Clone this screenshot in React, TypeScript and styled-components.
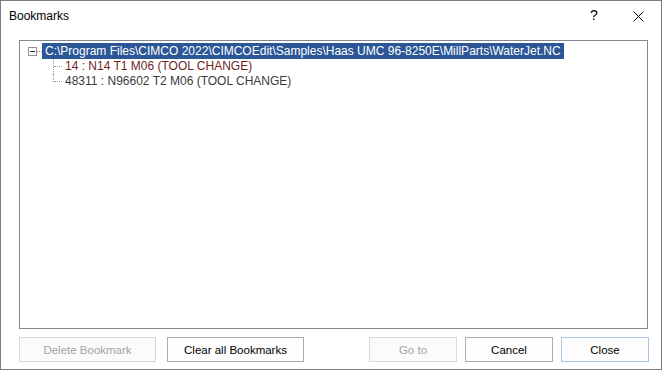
import React from "react";
import styled, { createGlobalStyle, css } from "styled-components";

const Global = createGlobalStyle`
  html, body { margin: 0; padding: 0; background: #ffffff; }
  * { box-sizing: border-box; }
  body { font-family: "Liberation Sans", Arial, sans-serif; font-size: 12px; color: #000; }
`;

const Window = styled.div`
  width: 662px;
  height: 370px;
  border: 1px solid #7b7b7b;
  background: #ffffff;
  display: flex;
  flex-direction: column;
`;

const TitleBar = styled.div`
  height: 30px;
  display: flex;
  align-items: center;
  padding-left: 8px;
`;

const Title = styled.div`
  flex: 1;
  font-size: 12px;
  color: #000;
  line-height: 16px;
  padding-bottom: 1px;
`;

const CaptionButton = styled.div`
  width: 46px;
  height: 30px;
  display: flex;
  align-items: center;
  justify-content: center;
  color: #000;
`;

const HelpGlyph = styled.span`
  display: block;
  margin-left: 4px;
  margin-top: -2px;
  font-size: 14px;
`;

const Body = styled.div`
  flex: 1;
  display: flex;
  flex-direction: column;
  padding: 9px 12px 7px 18px;
  min-height: 0;
`;

const TreeBox = styled.div`
  flex: 1;
  margin-right: 1px;
  border: 1px solid #828790;
  background: #ffffff;
  padding: 2px 0 0 8px;
  display: flex;
  flex-direction: column;
  min-height: 0;
`;

const Row = styled.div<{ $h?: number }>`
  height: ${(p) => p.$h ?? 15}px;
  display: flex;
  align-items: stretch;
`;

const Expander = styled.span`
  width: 9px;
  height: 9px;
  margin-top: 4px;
  border: 1px solid #919191;
  background: #fff;
  display: flex;
  align-items: center;
  justify-content: center;
  &::after {
    content: "";
    width: 5px;
    height: 1px;
    background: #2b2b2b;
  }
`;

const Connector = styled.span`
  width: 5px;
  align-self: center;
  height: 0;
  border-top: 1px dotted #a0a0a0;
`;

const Label = styled.span<{ $selected?: boolean; $tone?: "red" | "gray" }>`
  padding: 0 3px;
  display: flex;
  align-items: center;
  font-size: 12px;
  line-height: 15px;
  white-space: nowrap;
  color: ${(p) => (p.$tone === "red" ? "#6e1f1f" : "#3a3a3a")};
  ${(p) =>
    p.$selected &&
    css`
      background: #2b5797;
      color: #ffffff;
    `}
`;

const ChildList = styled.div`
  display: flex;
  flex-direction: column;
  padding-left: 25px;
`;

const Branch = styled.span<{ $last?: boolean }>`
  width: 9px;
  position: relative;
  &::before {
    content: "";
    position: absolute;
    left: 0;
    top: 0;
    height: ${(p) => (p.$last ? "8px" : "15px")};
    border-left: 1px dotted #a0a0a0;
  }
  &::after {
    content: "";
    position: absolute;
    left: 1px;
    top: 7px;
    width: 8px;
    border-top: 1px dotted #a0a0a0;
  }
`;

const ButtonRow = styled.div`
  margin-top: 8px;
  height: 25px;
  display: flex;
  align-items: stretch;
`;

const Spacer = styled.div`
  flex: 1;
`;

const Button = styled.button<{ $wide?: boolean; $gap?: number; $default?: boolean }>`
  width: ${(p) => (p.$wide ? "137px" : "88px")};
  margin-left: ${(p) => p.$gap ?? 0}px;
  height: 25px;
  padding: 0;
  border: 1px solid ${(p) => (p.$default ? "#a7c3e8" : "#adadad")};
  background: #fdfdfd;
  color: #000;
  font-family: "Liberation Sans", Arial, sans-serif;
  font-size: 11.5px;
  line-height: 16px;
  &:disabled {
    border-color: #dadada;
    color: #a3a3a3;
    background: #fbfbfb;
  }
`;

const CloseIcon = () => (
  <svg width="11" height="11" viewBox="0 0 11 11" style={{ display: "block" }}>
    <path d="M0.5 0.5 L10.5 10.5 M10.5 0.5 L0.5 10.5" stroke="#000" strokeWidth="1" fill="none" />
  </svg>
);

export default function App() {
  return (
    <>
      <Global />
      <Window>
        <TitleBar>
          <Title>Bookmarks</Title>
          <CaptionButton>
            <HelpGlyph>?</HelpGlyph>
          </CaptionButton>
          <CaptionButton>
            <CloseIcon />
          </CaptionButton>
        </TitleBar>
        <Body>
          <TreeBox>
            <Row $h={16}>
              <Expander />
              <Connector />
              <Label $selected>
                C:\Program Files\CIMCO 2022\CIMCOEdit\Samples\Haas UMC 96-8250E\MillParts\WaterJet.NC
              </Label>
            </Row>
            <ChildList>
              <Row>
                <Branch />
                <Label $tone="red">14 : N14 T1 M06 (TOOL CHANGE)</Label>
              </Row>
              <Row>
                <Branch $last />
                <Label $tone="gray">48311 : N96602 T2 M06 (TOOL CHANGE)</Label>
              </Row>
            </ChildList>
          </TreeBox>
          <ButtonRow>
            <Button $wide disabled>
              Delete Bookmark
            </Button>
            <Button $wide $gap={11}>
              Clear all Bookmarks
            </Button>
            <Spacer />
            <Button disabled>Go to</Button>
            <Button $gap={8}>Cancel</Button>
            <Button $gap={8} $default>
              Close
            </Button>
          </ButtonRow>
        </Body>
      </Window>
    </>
  );
}
